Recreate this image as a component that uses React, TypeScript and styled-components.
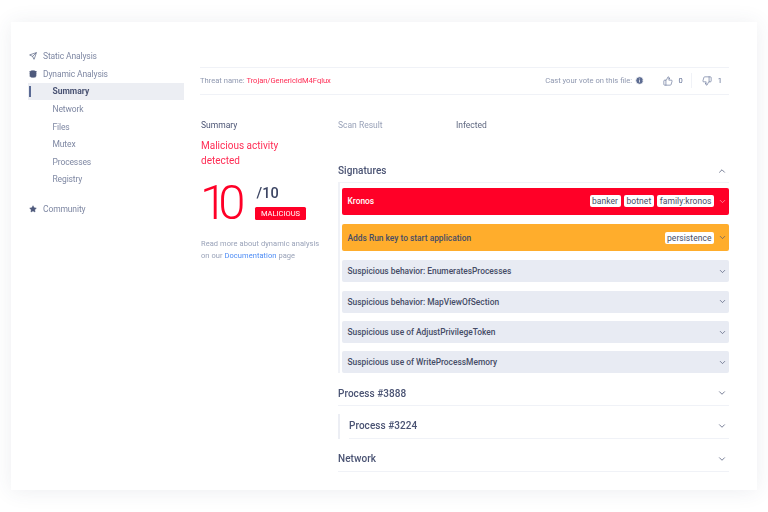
import React from "react";
import styled, { createGlobalStyle } from "styled-components";
import { ChevronDown, ChevronUp, Send, Database, Star, ThumbsUp, ThumbsDown, Info } from "lucide-react";

const Global = createGlobalStyle`
  html, body { margin: 0; padding: 0; background: #fff; }
  body { font-family: Roboto, "Liberation Sans", sans-serif; color: #3c4563; width: 768px; height: 512px; overflow: hidden; }
  #root { width: 768px; height: 512px; }
`;

const Page = styled.div`
  padding: 22px 11px;
  box-sizing: border-box;
  width: 768px;
  height: 512px;
`;
const Card = styled.div`
  display: flex;
  height: 468px;
  box-sizing: border-box;
  background: #fff;
  box-shadow: 0 1px 20px rgba(60, 70, 100, 0.09);
  padding: 25.5px 28px 0 17px;
  overflow: hidden;
  filter: blur(0.25px);
`;
const Sidebar = styled.nav`
  width: 156px;
  flex: none;
  display: flex;
  flex-direction: column;
`;
const NavItem = styled.div<{ $sub?: boolean; $active?: boolean; $gap?: boolean }>`
  display: flex;
  align-items: center;
  gap: 6px;
  height: 17.6px;
  font-size: 8.5px;
  letter-spacing: ${p => (p.$active ? "0" : "-0.12px")};
  color: ${p => (p.$active ? "#4a5373" : "#7f88a3")};
  font-weight: ${p => (p.$active ? 700 : 400)};
  padding-left: ${p => (p.$sub ? "24.5px" : "1px")};
  margin-top: ${p => (p.$gap ? "11.5px" : "0")};
  background: ${p => (p.$active ? "#eceef3" : "transparent")};
  position: relative;
  ${p => p.$active && `
    &::before {
      content: "";
      position: absolute;
      left: 1px;
      top: 3px;
      bottom: 3px;
      width: 1.5px;
      background: #5a6a94;
    }
  `}
`;
const NavIcon = styled.span`
  width: 8px;
  display: flex;
  align-items: center;
  justify-content: center;
  color: #4f5a7c;
`;
const Main = styled.main`
  margin-left: 16px;
  width: 529px;
  display: flex;
  flex-direction: column;
`;
const ThreatBar = styled.div`
  margin-top: 19px;
  height: 28px;
  box-sizing: border-box;
  border-top: 1px solid #f0f2f7;
  border-bottom: 1px solid #f0f2f7;
  display: flex;
  align-items: center;
  justify-content: space-between;
  font-size: 7.6px;
  color: #8f98b0;
`;
const Threat = styled.span`
  color: #ff2d55;
  letter-spacing: -0.06px;
`;
const VoteArea = styled.div`
  display: flex;
  align-items: center;
  color: #8f98b0;
`;
const VoteLabel = styled.span`
  display: flex;
  align-items: center;
  gap: 2.5px;
  margin-right: 19px;
`;
const VoteButton = styled.span<{ $divided?: boolean }>`
  display: flex;
  align-items: center;
  gap: 6px;
  height: 15px;
  color: #5d6c92;
  font-size: 7.5px;
  padding-left: ${p => (p.$divided ? "10px" : "0")};
  margin-left: ${p => (p.$divided ? "8px" : "0")};
  margin-right: ${p => (p.$divided ? "7px" : "0")};
  border-left: ${p => (p.$divided ? "1px solid #f0f2f7" : "none")};
`;
const Columns = styled.div`
  display: flex;
  margin-top: 23px;
`;
const Left = styled.div`
  width: 138px;
  flex: none;
  padding-left: 1px;
  box-sizing: border-box;
`;
const SummaryTitle = styled.div`
  font-size: 8.5px;
  line-height: 14px;
  color: #4a5373;
`;
const Malicious = styled.div`
  font-size: 10px;
  line-height: 15px;
  color: #ff2d55;
  margin-top: 6.5px;
`;
const ScoreRow = styled.div`
  display: flex;
  align-items: flex-start;
  margin-top: 10px;
  gap: 14px;
`;
const Score = styled.div`
  font-size: 49px;
  line-height: 50px;
  font-weight: 300;
  color: #ff0027;
  width: 38px;
  letter-spacing: -9px;
  margin-left: -1px;
`;
const ScoreSide = styled.div`
  display: flex;
  flex-direction: column;
  align-items: flex-start;
  margin-top: 7px;
  margin-left: 3px;
`;
const OutOf = styled.div`
  font-size: 14.5px;
  font-weight: 500;
  line-height: 18px;
  color: #3c4563;
  margin-left: 1.5px;
`;
const Badge = styled.div`
  margin-top: 4px;
  background: #ff0027;
  color: #fff;
  font-size: 7.5px;
  font-weight: 400;
  height: 13px;
  line-height: 13px;
  padding: 0 6px;
  border-radius: 1.5px;
`;
const ReadMore = styled.div`
  margin-top: 10px;
  font-size: 7.5px;
  line-height: 12px;
  color: #99a2b8;
  letter-spacing: 0.06px;
`;
const DocLink = styled.span`
  color: #4d8cf5;
`;
const Right = styled.div`
  flex: 1;
  display: flex;
  flex-direction: column;
`;
const ScanRow = styled.div`
  display: flex;
  font-size: 8.5px;
  line-height: 14px;
  height: 14px;
`;
const ScanKey = styled.span`
  width: 118px;
  color: #99a2b8;
`;
const ScanValue = styled.span`
  color: #5f6880;
`;
const Section = styled.div<{ $indented?: boolean; $top?: number; $h?: number; $pad?: number }>`
  display: flex;
  align-items: center;
  justify-content: space-between;
  box-sizing: border-box;
  height: ${p => p.$h ?? 25}px;
  margin-top: ${p => p.$top ?? 0}px;
  padding: ${p => p.$pad ?? 0}px 2px 0 0;
  border-bottom: 1px solid #f0f2f7;
  font-size: 10px;
  font-weight: 500;
  letter-spacing: 0.05px;
  color: #4a5373;
  margin-left: ${p => (p.$indented ? "9px" : "0")};
`;
const Chevron = styled.span<{ $color?: string }>`
  display: flex;
  color: ${p => p.$color ?? "#4a5373"};
`;
const SigList = styled.div`
  display: flex;
  flex-direction: column;
  gap: 8.3px;
  border-left: 2px solid #f0f2f7;
  padding: 4.5px 0 0 2px;
`;
const Sig = styled.div<{ $tone: "red" | "orange" | "grey" }>`
  display: flex;
  align-items: center;
  justify-content: space-between;
  box-sizing: border-box;
  height: ${p => (p.$tone === "grey" ? "22px" : "27.5px")};
  margin-bottom: ${p => (p.$tone === "grey" ? "0" : "0.7px")};
  padding: 0 2px 0 5.5px;
  border-radius: 2px;
  font-size: 8.4px;
  font-weight: 500;
  background: ${p => (p.$tone === "red" ? "#ff0027" : p.$tone === "orange" ? "#ffad2c" : "#e8ebf3")};
  color: ${p => (p.$tone === "red" ? "#ffffff" : "#454c66")};
`;
const Tags = styled.div`
  display: flex;
  align-items: center;
  gap: 3.5px;
`;
const Tag = styled.span`
  background: #fff;
  color: #454c66;
  font-size: 8.5px;
  font-weight: 400;
  letter-spacing: 0.05px;
  height: 12px;
  line-height: 12px;
  padding: 0 2.5px;
  border-radius: 2px;
`;
const SigEnd = styled.div`
  display: flex;
  align-items: center;
  gap: 4px;
`;
const SubProcess = styled.div`
  margin-top: 8px;
  border-left: 2px solid #eceef4;
`;

function Signature({ tone, label, tags }: { tone: "red" | "orange" | "grey"; label: string; tags?: string[] }) {
  return (
    <Sig $tone={tone}>
      <span>{label}</span>
      <SigEnd>
        {tags && <Tags>{tags.map(t => <Tag key={t}>{t}</Tag>)}</Tags>}
        <Chevron $color={tone === "red" ? "#ffb3c0" : undefined}><ChevronDown size={9} strokeWidth={1.8} /></Chevron>
      </SigEnd>
    </Sig>
  );
}

const subs = ["Summary", "Network", "Files", "Mutex", "Processes", "Registry"];

export default function App() {
  return (
    <Page>
      <Global />
      <Card>
        <Sidebar>
          <NavItem><NavIcon><Send size={8} strokeWidth={2} /></NavIcon>Static Analysis</NavItem>
          <NavItem><NavIcon><Database size={8} strokeWidth={2} fill="currentColor" /></NavIcon>Dynamic Analysis</NavItem>
          {subs.map((s, i) => <NavItem key={s} $sub $active={i === 0}>{s}</NavItem>)}
          <NavItem $gap><NavIcon><Star size={8} fill="currentColor" strokeWidth={1} /></NavIcon>Community</NavItem>
        </Sidebar>
        <Main>
          <ThreatBar>
            <span>Threat name: <Threat>Trojan/GenericIdM4Fqlux</Threat></span>
            <VoteArea>
              <VoteLabel>Cast your vote on this file: <Info size={9} strokeWidth={2} color="#fff" fill="#5d6c92" /></VoteLabel>
              <VoteButton><ThumbsUp size={10} strokeWidth={1.5} />0</VoteButton>
              <VoteButton $divided><ThumbsDown size={10} strokeWidth={1.5} />1</VoteButton>
            </VoteArea>
          </ThreatBar>
          <Columns>
            <Left>
              <SummaryTitle>Summary</SummaryTitle>
              <Malicious>Malicious activity<br />detected</Malicious>
              <ScoreRow>
                <Score>10</Score>
                <ScoreSide>
                  <OutOf>/10</OutOf>
                  <Badge>MALICIOUS</Badge>
                </ScoreSide>
              </ScoreRow>
              <ReadMore>Read more about dynamic analysis<br />on our <DocLink>Documentation</DocLink> page</ReadMore>
            </Left>
            <Right>
              <ScanRow><ScanKey>Scan Result</ScanKey><ScanValue>Infected</ScanValue></ScanRow>
              <Section $top={26.5} $pad={1}>Signatures<Chevron><ChevronUp size={10} strokeWidth={1.8} /></Chevron></Section>
              <SigList>
                <Signature tone="red" label="Kronos" tags={["banker", "botnet", "family:kronos"]} />
                <Signature tone="orange" label="Adds Run key to start application" tags={["persistence"]} />
                <Signature tone="grey" label="Suspicious behavior: EnumeratesProcesses" />
                <Signature tone="grey" label="Suspicious behavior: MapViewOfSection" />
                <Signature tone="grey" label="Suspicious use of AdjustPrivilegeToken" />
                <Signature tone="grey" label="Suspicious use of WriteProcessMemory" />
              </SigList>
              <Section $h={32.5} $pad={8}>Process #3888<Chevron><ChevronDown size={10} strokeWidth={1.8} /></Chevron></Section>
              <SubProcess>
                <Section $indented>Process #3224<Chevron><ChevronDown size={10} strokeWidth={1.8} /></Chevron></Section>
              </SubProcess>
              <Section $h={33} $pad={8}>Network<Chevron><ChevronDown size={10} strokeWidth={1.8} /></Chevron></Section>
            </Right>
          </Columns>
        </Main>
      </Card>
    </Page>
  );
}
